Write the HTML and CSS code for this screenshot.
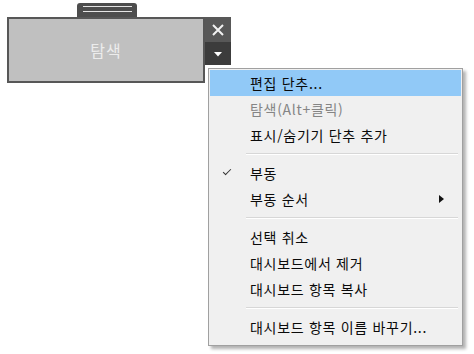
FILE: index.html
```html
<!DOCTYPE html>
<html lang="ko">
<head>
  <meta charset="UTF-8" />
  <meta name="viewport" content="width=device-width, initial-scale=1.0" />
  <title>대시보드 항목 메뉴</title>
  <link rel="stylesheet" href="styles.css">
</head>
<body>
  <div class="tile">
    <div class="grip"><span></span><span></span></div>
    <div class="tile-row">
      <div class="tile-body">탐색</div>
      <div class="tile-tools">
        <button class="tool close" title="닫기">
          <svg width="12" height="12" viewBox="0 0 12 12"><path d="M1 1L11 11M11 1L1 11" stroke="#f2f2f2" stroke-width="2"/></svg>
        </button>
        <button class="tool more" title="메뉴">
          <svg width="8" height="5" viewBox="0 0 8 5"><path d="M0 0H8L4 4.5Z" fill="#ffffff"/></svg>
        </button>
      </div>
    </div>
  </div>

  <ul class="menu">
    <li class="item active">편집 단추...</li>
    <li class="item disabled">탐색(Alt+클릭)</li>
    <li class="item">표시/숨기기 단추 추가</li>
    <li class="sep"></li>
    <li class="item checked">부동</li>
    <li class="item sub">부동 순서</li>
    <li class="sep"></li>
    <li class="item">선택 취소</li>
    <li class="item">대시보드에서 제거</li>
    <li class="item">대시보드 항목 복사</li>
    <li class="sep"></li>
    <li class="item">대시보드 항목 이름 바꾸기...</li>
  </ul>
</body>
</html>
```

FILE: styles.css
```css
body {
  margin: 0;
  background: #ffffff;
  font-family: "Noto Sans CJK KR", "Noto Sans", sans-serif;
}
.tile {
  padding: 3px 0 0 7px;
}
.grip {
  margin-left: 70px;
  width: 60px;
  height: 14px;
  box-sizing: border-box;
  padding: 3px 5px 0 6px;
  background: #4d4d4d;
  border-radius: 3px 3px 0 0;
}
.grip span {
  display: block;
  height: 1px;
  background: #e4e4e4;
  margin-bottom: 4px;
}
.tile-row {
  display: flex;
  align-items: flex-start;
}
.tile-body {
  width: 198px;
  height: 66px;
  box-sizing: border-box;
  border: 2px solid #575757;
  background: #c0c0c0;
  color: #ececec;
  font-size: 16px;
  display: flex;
  align-items: center;
  justify-content: center;
  letter-spacing: 1px;
}
.tile-tools {
  width: 26px;
  display: flex;
  flex-direction: column;
}
.tool {
  border: none;
  padding: 0;
  margin: 0;
  width: 26px;
  display: flex;
  align-items: center;
  justify-content: center;
}
.tool.close {
  height: 25px;
  background: #585858;
}
.tool.more {
  height: 23px;
  background: #3c3c3c;
  padding-top: 1px;
}
.menu {
  position: absolute;
  left: 208px;
  top: 68px;
  width: 255px;
  box-sizing: border-box;
  margin: 0;
  padding: 1px 1px 5px 1px;
  list-style: none;
  background: #f0f0f0;
  border: 1px solid #a0a0a0;
  box-shadow: 3px 3px 3px rgba(0, 0, 0, 0.3);
  font-size: 14px;
  letter-spacing: 0.7px;
  color: #0a0a0a;
}
.item {
  position: relative;
  height: 26px;
  line-height: 26px;
  padding-left: 40px;
  white-space: nowrap;
}
.item.active {
  background: #91c9f7;
}
.item.disabled {
  color: #858585;
}
.item.checked::before {
  content: "";
  position: absolute;
  left: 13px;
  top: 9px;
  width: 7px;
  height: 3px;
  border-left: 1.5px solid #333;
  border-bottom: 1.5px solid #333;
  transform: rotate(-45deg);
}
.item.sub::after {
  content: "";
  position: absolute;
  right: 17px;
  top: 9px;
  border-left: 5px solid #111;
  border-top: 4px solid transparent;
  border-bottom: 4px solid transparent;
}
.sep {
  height: 12px;
  margin-left: 36px;
  margin-right: 3px;
  display: flex;
  flex-direction: column;
  justify-content: center;
}
.sep::before {
  content: "";
  height: 1px;
  background: #d7d7d7;
  border-bottom: 1px solid #ffffff;
}
```
